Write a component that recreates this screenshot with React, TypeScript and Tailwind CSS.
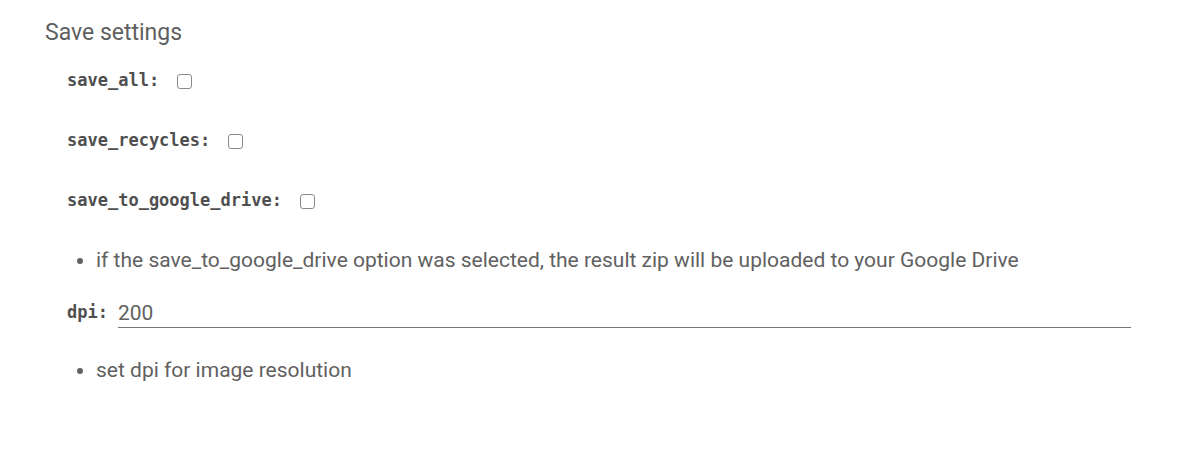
import React, { useState } from 'react';

const labelCls = "font-['DejaVu_Sans_Mono',monospace] font-bold text-[17px] text-[#4f4f4f]";

function CheckRow({ name }: { name: string }) {
  const [checked, setChecked] = useState(false);
  return (
    <div className="flex items-center h-[60px]">
      <span className={labelCls}>{name}:</span>
      <button
        type="button"
        onClick={() => setChecked(!checked)}
        className="ml-[18px] w-[15px] h-[15px] rounded-[3px] border border-[#8a8a8a] bg-white"
        aria-pressed={checked}
      />
    </div>
  );
}

function Note({ children }: { children: React.ReactNode }) {
  return (
    <ul className="list-disc pl-[29px] text-[21px] leading-[24px] text-[#616161]">
      <li>{children}</li>
    </ul>
  );
}

export default function App() {
  const [dpi, setDpi] = useState('200');

  return (
    <div className="min-h-screen bg-white pt-[19px] pl-[45px] font-['Roboto',sans-serif]">
      <div className="h-[32px] text-[23px] leading-[27px] text-[#5f5f5f]">Save settings</div>

      <div className="pl-[22px]">
        <CheckRow name="save_all" />
        <CheckRow name="save_recycles" />
        <CheckRow name="save_to_google_drive" />

        <div className="flex items-center h-[58px]">
          <Note>if the save_to_google_drive option was selected, the result zip will be uploaded to your Google Drive</Note>
        </div>

        <div className="flex items-center h-[48px] pr-[55px]">
          <span className={labelCls}>dpi:</span>
          <input
            value={dpi}
            onChange={(e) => setDpi(e.target.value)}
            className="ml-[10px] flex-1 border-b border-[#757575] bg-transparent pt-[2px] pb-[2px] text-[21px] leading-[24px] text-[#616161] outline-none"
          />
        </div>

        <div className="flex items-center h-[66px]">
          <Note>set dpi for image resolution</Note>
        </div>
      </div>
    </div>
  );
}
